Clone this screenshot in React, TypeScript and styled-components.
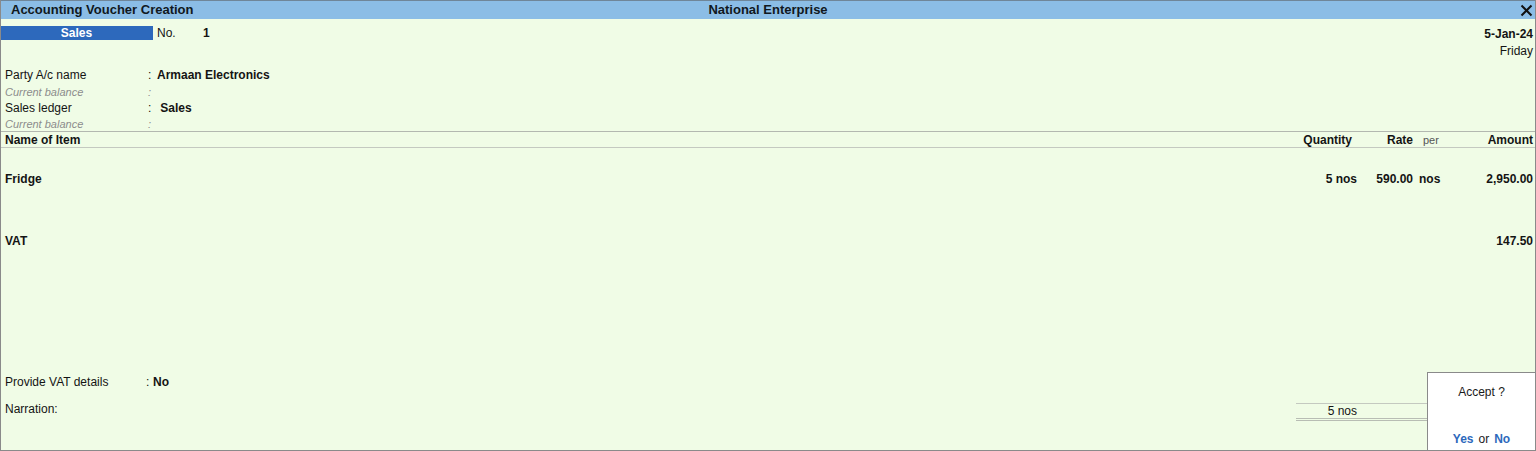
import React from "react";
import styled, { createGlobalStyle } from "styled-components";

const Global = createGlobalStyle`
  html, body { margin: 0; padding: 0; background: #f0fce6; }
  body { font-family: "Liberation Sans", Arial, sans-serif; font-size: 12px; color: #141414; }
  * { box-sizing: border-box; }
`;

const Screen = styled.div`
  position: relative;
  width: 1536px;
  height: 451px;
  background: #f0fce6;
  border-left: 1px solid #8a8a8a;
  border-right: 1px solid #8a8a8a;
  border-bottom: 1px solid #8a8a8a;
  display: flex;
  flex-direction: column;
  overflow: hidden;
`;

const TitleBar = styled.div`
  height: 19px;
  border-top: 1px solid #6f8699;
  background: #8bbde6;
  display: grid;
  grid-template-columns: 1fr auto 1fr;
  align-items: center;
  font-size: 13px;
  font-weight: bold;
  color: #101820;
  margin-left: -1px;
  margin-right: -1px;
`;

const TitleLeft = styled.div`
  padding-left: 11px;
  line-height: 16px;
`;

const TitleCenter = styled.div`
  line-height: 16px;
`;

const TitleRight = styled.div`
  display: flex;
  justify-content: flex-end;
  padding-right: 3px;
`;

const Top = styled.div`
  display: flex;
  align-items: flex-start;
  justify-content: space-between;
  margin-top: 7px;
`;

const LeftCol = styled.div`
  display: flex;
  flex-direction: column;
`;

const VoucherRow = styled.div`
  display: flex;
  align-items: center;
  height: 14px;
`;

const TypeBand = styled.div`
  width: 153px;
  height: 14px;
  margin-left: -1px;
  background: #2d69bc;
  color: #ffffff;
  font-weight: bold;
  text-align: center;
  line-height: 14px;
`;

const NoLabel = styled.span`
  margin-left: 4px;
  width: 46px;
`;

const NoValue = styled.span`
  font-weight: bold;
`;

const DateBlock = styled.div`
  display: flex;
  flex-direction: column;
  align-items: flex-end;
  padding-right: 2px;
  line-height: 14px;
`;

const DateText = styled.span`
  font-weight: bold;
  margin-top: 1px;
`;

const DayText = styled.span`
  margin-top: 3px;
`;

const InfoBlock = styled.div`
  margin-top: 27px;
  display: flex;
  flex-direction: column;
`;

const InfoRow = styled.div<{ $h: number; $muted?: boolean }>`
  display: grid;
  grid-template-columns: 143px 9px 1fr;
  padding-left: 4px;
  height: ${(p) => p.$h}px;
  align-items: center;
  font-size: ${(p) => (p.$muted ? "11px" : "12px")};
  font-style: ${(p) => (p.$muted ? "italic" : "normal")};
  color: ${(p) => (p.$muted ? "#8c8c8c" : "#141414")};
`;

const Value = styled.span`
  font-weight: bold;
`;

const TableHead = styled.div`
  display: grid;
  grid-template-columns: 1fr 70px 56px 50px 70px;
  padding: 1px 2px 0 4px;
  height: 17px;
  border-top: 1px solid #b3b8b0;
  border-bottom: 1px solid #c4c9c0;
  align-items: center;
  font-weight: bold;
`;

const ItemRow = styled.div<{ $gap: number }>`
  display: grid;
  grid-template-columns: 1fr 70px 56px 50px 70px;
  padding: 0 2px 0 4px;
  height: 16px;
  margin-top: ${(p) => p.$gap}px;
  align-items: center;
  font-weight: bold;
`;

const Cell = styled.span<{ $align?: "left" | "right"; $pad?: number; $pl?: number; $normal?: boolean; $muted?: boolean }>`
  text-align: ${(p) => p.$align || "left"};
  padding-right: ${(p) => p.$pad || 0}px;
  padding-left: ${(p) => p.$pl || 0}px;
  font-weight: ${(p) => (p.$normal ? "normal" : "bold")};
  color: ${(p) => (p.$muted ? "#555" : "inherit")};
  font-size: ${(p) => (p.$normal ? "11px" : "12px")};
`;

const Footer = styled.div`
  margin-top: auto;
  margin-bottom: 29px;
  display: flex;
  flex-direction: column;
`;

const VatRow = styled.div`
  display: grid;
  grid-template-columns: 141px 7px 1fr;
  padding-left: 4px;
  height: 16px;
  align-items: center;
`;

const NarrationRow = styled.div`
  display: flex;
  align-items: flex-start;
  margin-top: 11px;
  padding-left: 4px;
`;

const NarrationLabel = styled.span`
  flex: 1;
  line-height: 16px;
`;

const TotalBlock = styled.div`
  width: 237px;
  margin-top: 2px;
  margin-right: 2px;
  border-top: 1px solid #c4c9c0;
  border-bottom: 3px double #b8bdb4;
  height: 18px;
  display: flex;
`;

const TotalQty = styled.span`
  width: 61px;
  text-align: right;
  line-height: 15px;
`;

const AcceptBox = styled.div`
  position: absolute;
  right: -1px;
  bottom: -1px;
  width: 109px;
  height: 79px;
  background: #ffffff;
  border: 1px solid #8a8a8a;
  display: flex;
  flex-direction: column;
  align-items: center;
  justify-content: space-between;
  padding: 12px 0 4px;
`;

const AcceptTitle = styled.span`
  font-size: 12px;
  color: #1a1a1a;
`;

const AcceptChoice = styled.span`
  font-size: 12px;
  color: #1a1a1a;
  display: flex;
  gap: 5px;
`;

const Choice = styled.b`
  color: #2d69bc;
`;

const CloseIcon = () => (
  <svg width="13" height="13" viewBox="0 0 13 13">
    <path d="M1.5 1.5 L11.5 11.5 M11.5 1.5 L1.5 11.5" stroke="#111" strokeWidth="2" />
  </svg>
);

export default function App() {
  return (
    <>
      <Global />
      <Screen>
        <TitleBar>
          <TitleLeft>Accounting Voucher Creation</TitleLeft>
          <TitleCenter>National Enterprise</TitleCenter>
          <TitleRight>
            <CloseIcon />
          </TitleRight>
        </TitleBar>

        <Top>
          <LeftCol>
            <VoucherRow>
              <TypeBand>Sales</TypeBand>
              <NoLabel>No.</NoLabel>
              <NoValue>1</NoValue>
            </VoucherRow>
            <InfoBlock>
              <InfoRow $h={16}>
                <span>Party A/c name</span>
                <span>:</span>
                <Value>Armaan Electronics</Value>
              </InfoRow>
              <InfoRow $h={17} $muted>
                <span>Current balance</span>
                <span>:</span>
                <span />
              </InfoRow>
              <InfoRow $h={16}>
                <span>Sales ledger</span>
                <span>:</span>
                <Value>&nbsp;Sales</Value>
              </InfoRow>
              <InfoRow $h={15} $muted>
                <span>Current balance</span>
                <span>:</span>
                <span />
              </InfoRow>
            </InfoBlock>
          </LeftCol>
          <DateBlock>
            <DateText>5-Jan-24</DateText>
            <DayText>Friday</DayText>
          </DateBlock>
        </Top>

        <TableHead>
          <Cell>Name of Item</Cell>
          <Cell $align="right" $pad={5}>Quantity</Cell>
          <Cell $align="right">Rate</Cell>
          <Cell $pl={10} $normal $muted>per</Cell>
          <Cell $align="right">Amount</Cell>
        </TableHead>

        <ItemRow $gap={23}>
          <Cell>Fridge</Cell>
          <Cell $align="right">5 nos</Cell>
          <Cell $align="right">590.00</Cell>
          <Cell $pl={6}>nos</Cell>
          <Cell $align="right">2,950.00</Cell>
        </ItemRow>

        <ItemRow $gap={46}>
          <Cell>VAT</Cell>
          <Cell />
          <Cell />
          <Cell />
          <Cell $align="right">147.50</Cell>
        </ItemRow>

        <Footer>
          <VatRow>
            <span>Provide VAT details</span>
            <span>:</span>
            <Value>No</Value>
          </VatRow>
          <NarrationRow>
            <NarrationLabel>Narration:</NarrationLabel>
            <TotalBlock>
              <TotalQty>5 nos</TotalQty>
            </TotalBlock>
          </NarrationRow>
        </Footer>

        <AcceptBox>
          <AcceptTitle>Accept ?</AcceptTitle>
          <AcceptChoice>
            <Choice>Yes</Choice>
            <span>or</span>
            <Choice>No</Choice>
          </AcceptChoice>
        </AcceptBox>
      </Screen>
    </>
  );
}
